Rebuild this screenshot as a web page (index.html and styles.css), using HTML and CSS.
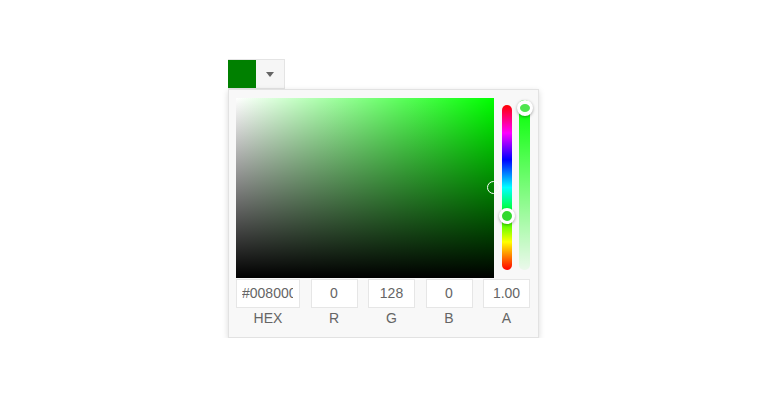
FILE: index.html
```html
<!DOCTYPE html>
<html>
<head>
<meta charset="utf-8">
<link rel="stylesheet" href="styles.css">
</head>
<body>
<div class="wrap">
  <div class="picker">
    <span class="swatch"></span>
    <span class="arrow"><span class="tri"></span></span>
  </div>
  <div class="popup">
    <div class="top">
      <div class="hsv">
        <div class="hsv-white"></div>
        <div class="hsv-black"></div>
        <span class="drag"></span>
      </div>
      <div class="hue">
        <span class="knob hue-knob"></span>
      </div>
      <div class="alpha">
        <span class="knob alpha-knob"></span>
      </div>
    </div>
    <div class="inputs">
      <div class="field hex"><span class="box"><span class="clip">#008000</span></span><span class="lbl">HEX</span></div>
      <div class="field"><span class="box">0</span><span class="lbl">R</span></div>
      <div class="field"><span class="box">128</span><span class="lbl">G</span></div>
      <div class="field"><span class="box">0</span><span class="lbl">B</span></div>
      <div class="field"><span class="box">1.00</span><span class="lbl">A</span></div>
    </div>
  </div>
</div>
</body>
</html>
```
FILE: styles.css
```css
html, body { margin: 0; padding: 0; background: #fff; }
body { font-family: "Liberation Sans", Arial, sans-serif; color: #656565; }
.wrap { padding: 59px 0 0 228px; }
.picker {
  display: flex; width: 57px; height: 30px; box-sizing: border-box;
  border: 1px solid #e4e4e4; border-left: 0; background: #f6f6f6;
}
.swatch { width: 28px; height: 28px; background: #008000; }
.arrow { flex: 1; display: flex; align-items: center; justify-content: center; }
.tri { width: 0; height: 0; border-left: 4px solid transparent; border-right: 4px solid transparent; border-top: 5px solid #656565; margin-top: 1px; }
.popup {
  width: 311px; box-sizing: border-box; padding: 8px 8px 10px 7px;
  background: #f8f8f8; border: 1px solid #e2e2e2;
  box-shadow: 0 2px 6px rgba(0,0,0,0.15);
}
.top { display: flex; height: 181px; }
.hsv {
  position: relative; width: 258px; height: 180px;
  background: #00ff00;
}
.hsv-white { position: absolute; inset: 0; background: linear-gradient(to right, #fff, rgba(255,255,255,0)); }
.hsv-black { position: absolute; inset: 0; background: linear-gradient(to top, #000, rgba(0,0,0,0)); }
.drag {
  position: absolute; left: 251px; top: 83px; width: 13px; height: 13px;
  border: 1px solid #fff; border-radius: 50%; box-sizing: border-box;
}
.hue {
  position: relative; margin: 7px 0 0 8px; width: 10px; height: 165px; border-radius: 5px;
  background: linear-gradient(to bottom, #ff0000, #ff00ff 17%, #0000ff 33%, #00ffff 50%, #00ff00 67%, #ffff00 83%, #ff0000);
}
.alpha {
  position: relative; margin: 2px 0 0 7px; width: 11px; height: 170px; border-radius: 5px;
  background: linear-gradient(to bottom, #00ff00, rgba(0,255,0,0.05));
}
.knob {
  position: absolute; width: 16px; height: 16px; box-sizing: border-box; border-radius: 50%;
  border: 3px solid #fff; background: #3cd43c; box-shadow: 0 1px 3px rgba(0,0,0,0.35);
}
.hue-knob { left: -3px; top: 103px; background: #33d92f; }
.alpha-knob { left: -2px; top: 0; background: #4ee64e; border-width: 4px 3px; }
.inputs { display: flex; justify-content: space-between; margin-top: 0; }
.field { display: flex; flex-direction: column; align-items: center; width: 47px; }
.field.hex { width: 64px; }
.box {
  width: 100%; height: 29px; box-sizing: border-box; border: 1px solid #e6e6e6; background: #fff;
  font-size: 14px; line-height: 27px; text-align: center; overflow: hidden; white-space: nowrap;
}
.hex .box { text-align: left; padding: 0 6px 0 5px; }
.clip { display: block; overflow: hidden; white-space: nowrap; }
.lbl { font-size: 14px; line-height: 18px; margin-top: 1px; }
```
